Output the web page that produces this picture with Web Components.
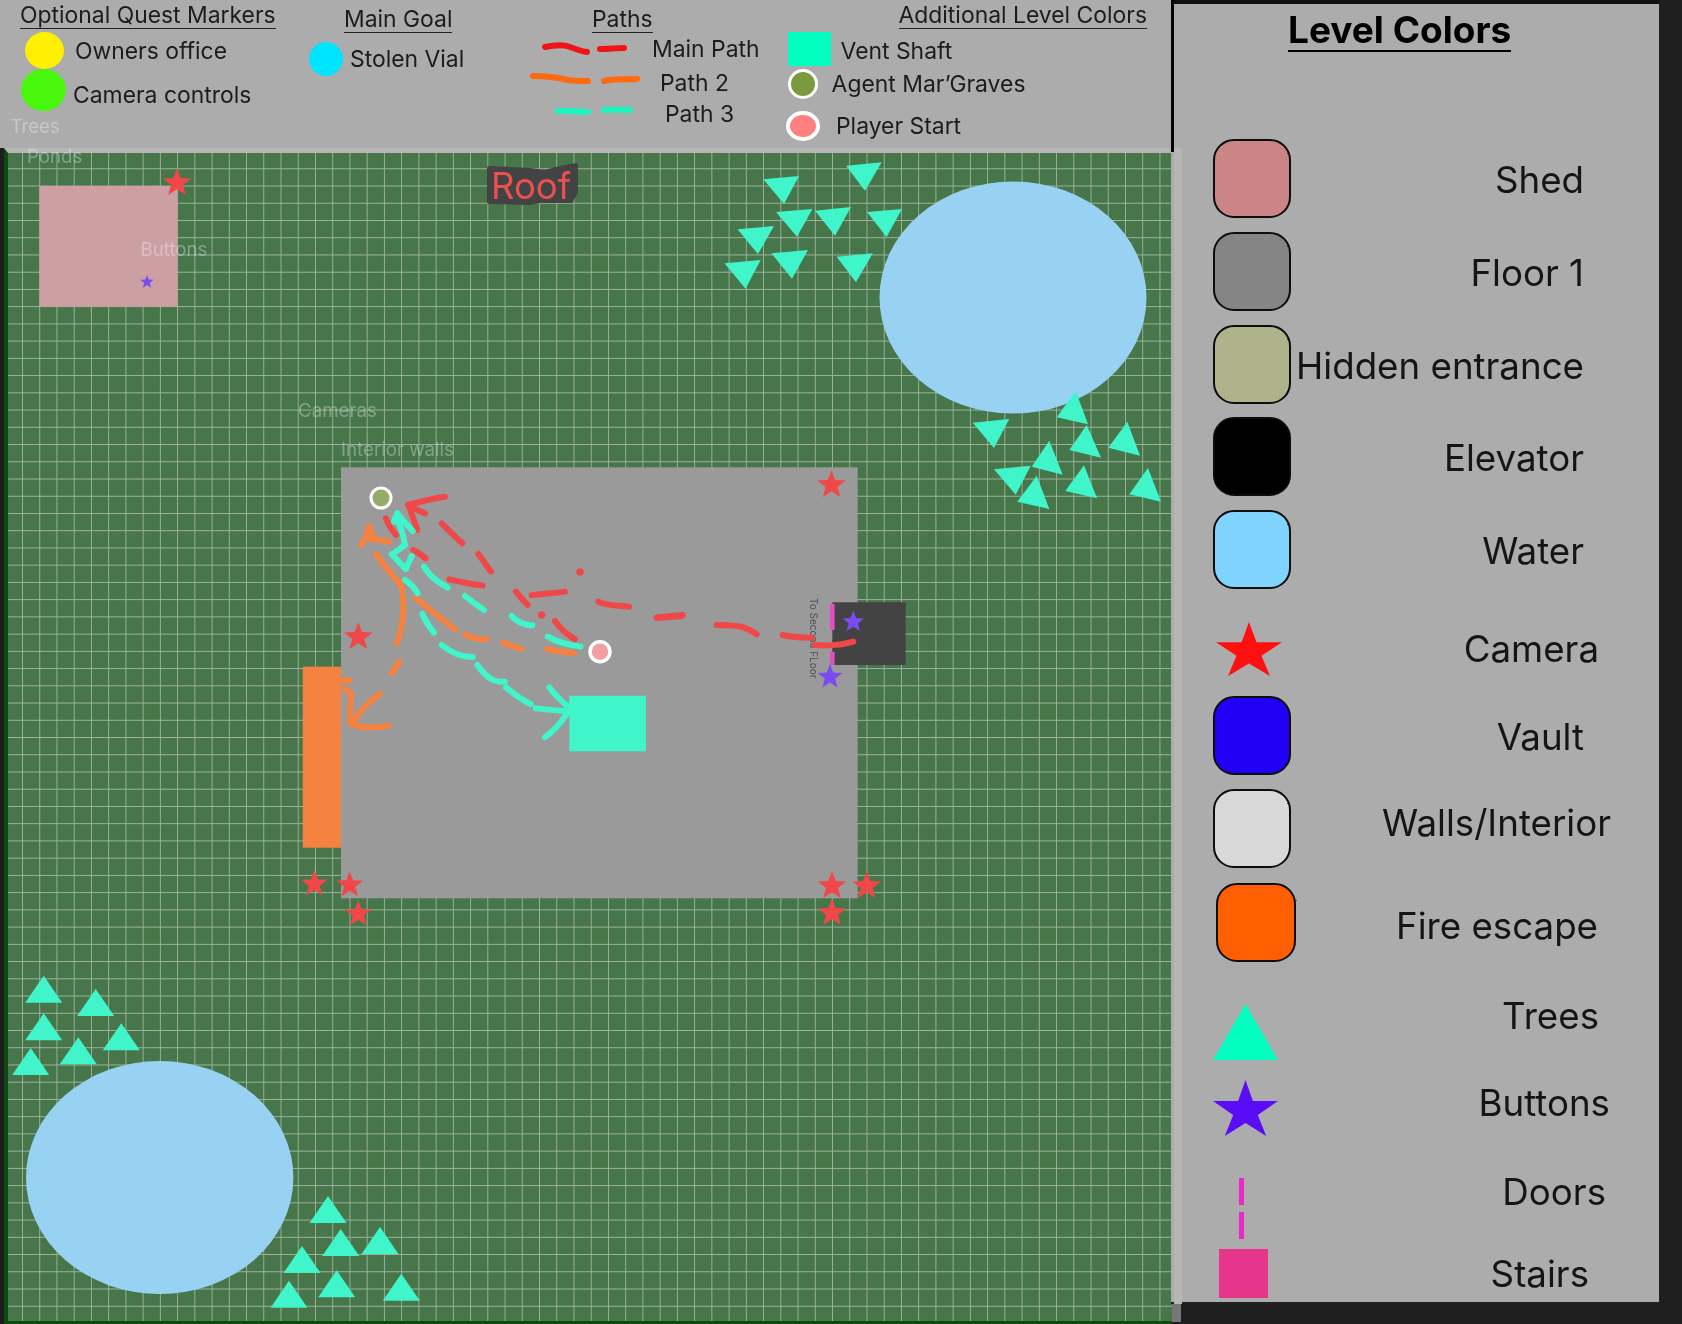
<!DOCTYPE html>
<html>
<head>
<meta charset="utf-8">
<title>Level map</title>
<style>
html,body{margin:0;padding:0;background:#1e1e1e;overflow:hidden;}
</style>
</head>
<body>
<level-sheet>
    <div slot="left">
        <legend-bar>
            <legend-group heading="Optional Quest Markers" style="--w:309px;--hl:20px;--ht:2.5px">
                <legend-row style="--mt:3px;--pl:25px;--gap:11px;--nudge:1px"><mark-dot slot="mark" style="--mw:39px;--mh:37px;--c:#fff000"></mark-dot>Owners office</legend-row>
                <legend-row style="--mt:0px;--pl:21px;--gap:7px;--nudge:5px"><mark-dot slot="mark" style="--mw:45px;--mh:42px;--c:#47f70c"></mark-dot>Camera controls</legend-row>
            </legend-group>
            <legend-group heading="Main Goal" style="--w:221px;--hl:35px;--ht:6.5px">
                <legend-row style="--mt:9px;--pl:0px;--gap:7.5px;--nudge:0px"><mark-dot slot="mark" style="--mw:33.5px;--mh:34px;--c:#00e5ff"></mark-dot>Stolen Vial</legend-row>
            </legend-group>
            <legend-group heading="Paths" style="--w:256px;--hl:62px;--ht:6.5px">
                <legend-row style="--mt:6px;--pl:0px;--gap:12px;--nudge:0px"><svg slot="mark" width="110" height="20" fill="none" stroke="#f01414" stroke-width="6" stroke-linecap="round"><path d="M15,8 C25,6 35,6 40,8 C45,10 50,12 57,13"/><path d="M70,10 C78,10 86,9 94,9"/></svg>Main Path</legend-row>
                <legend-row style="--mt:14px;--pl:0px;--gap:20px;--nudge:0px"><svg slot="mark" width="110" height="20" fill="none" stroke="#ff6a10" stroke-width="6" stroke-linecap="round"><path d="M3,3 C15,3 30,5 38,7 C45,8 52,8 58,8"/><path d="M74,8 C85,5 98,7 107,6"/></svg>Path 2</legend-row>
                <legend-row style="--mt:11px;--pl:0px;--gap:25px;--nudge:0px"><svg slot="mark" width="110" height="20" fill="none" stroke="#1cf5c0" stroke-width="6" stroke-linecap="round"><path d="M28,7 C38,6 48,8 58,8"/><path d="M74,6 C82,6 90,5 100,6"/></svg>Path 3</legend-row>
            </legend-group>
            <legend-group heading="Additional Level Colors" style="--w:385px;--hl:112.5px;--ht:3px">
                <legend-row style="--mt:2.5px;--pl:2px;--gap:9.5px;--nudge:2px"><mark-dot slot="mark" style="--mw:43px;--mh:34px;--c:#00ffc0;--r:0"></mark-dot>Vent Shaft</legend-row>
                <legend-row style="--mt:3px;--pl:2px;--gap:13.6px;--nudge:0px"><mark-dot slot="mark" style="--mw:30px;--mh:30px;--c:#7b9a3d;--b:3px solid #fff"></mark-dot>Agent Mar’Graves</legend-row>
                <legend-row style="--mt:12px;--pl:0px;--gap:16px;--nudge:0px"><mark-dot slot="mark" style="--mw:34px;--mh:30px;--c:#ff8080;--b:4px solid #fff"></mark-dot>Player Start</legend-row>
            </legend-group>
        </legend-bar>
        <level-map></level-map>
    </div>
    <level-colors slot="right" heading="Level Colors">
        <color-row kind="box" color="#cb8585" style="--mt:87px;--mr:75px;--nudge:2px">Shed</color-row>
        <color-row kind="box" color="#858585" style="--mt:14px;--mr:75px;--nudge:2px">Floor 1</color-row>
        <color-row kind="box" color="#aeb38c" style="--mt:14px;--mr:75px;--nudge:2px">Hidden entrance</color-row>
        <color-row kind="box" color="#000000" style="--mt:13px;--mr:75px;--nudge:2px">Elevator</color-row>
        <color-row kind="box" color="#7fd4ff" style="--mt:14px;--mr:75px;--nudge:2px">Water</color-row>
        <color-row kind="star" color="#ff1010" style="--mt:33px;--mr:60px;--ml:45px;--iw:66px;--ih:54px">Camera</color-row>
        <color-row kind="box" color="#2006f5" style="--mt:20px;--mr:75px;--nudge:2px">Vault</color-row>
        <color-row kind="box" color="#d9d9d9" style="--mt:14px;--mr:48px;--nudge:-11px">Walls/Interior</color-row>
        <color-row kind="box" color="#ff5f00" style="--mt:15px;--mr:61px;--ml:45px;--iw:80px;--nudge:7px">Fire escape</color-row>
        <color-row kind="tri" color="#00ffc0" style="--mt:42px;--mr:60px;--iw:65px;--ih:56px;--nudge:-32px">Trees</color-row>
        <color-row kind="star" color="#5a0cf5" style="--mt:20px;--mr:49px;--iw:65px;--ih:56px;--nudge:-10px">Buttons</color-row>
        <color-row kind="door" color="#e629c8" style="--mt:42px;--mr:53px;--iw:65px;--ih:61px;--nudge:-33px">Doors</color-row>
        <color-row kind="square" color="#e6358b" style="--mt:10px;--mr:70px;--ml:48px;--iw:49px;--ih:49px">Stairs</color-row>
    </level-colors>
</level-sheet>

<script>
const FONT = '"Inter","Liberation Sans",sans-serif';

class levelSheet extends HTMLElement {
    constructor() {
        super();
        this.attachShadow({ mode: 'open' });
        this.shadowRoot.innerHTML = `
        <style>
            :host{display:flex;width:1682px;height:1324px;background:#1e1e1e;font-family:${FONT};filter:blur(.45px);}
            .l{width:1171px;flex:none;}
            .r{flex:none;}
        </style>
        <div class="l"><slot name="left"></slot></div>
        <div class="r"><slot name="right"></slot></div>`;
    }
}

class legendBar extends HTMLElement {
    constructor() {
        super();
        this.attachShadow({ mode: 'open' });
        this.shadowRoot.innerHTML = `
        <style>
            :host{display:flex;height:148px;background:#acacac;color:#1c1c1c;}
        </style>
        <slot></slot>`;
    }
}

class legendGroup extends HTMLElement {
    constructor() {
        super();
        this.attachShadow({ mode: 'open' });
        this.shadowRoot.innerHTML = `
        <style>
            :host{display:flex;flex-direction:column;align-items:flex-start;flex:none;width:var(--w);}
            h3{margin:var(--ht) 0 0 var(--hl);font:400 22.9px/25px ${FONT};border-bottom:1.5px solid #222;white-space:nowrap;}
        </style>
        <h3></h3>
        <slot></slot>`;
        this.shadowRoot.querySelector('h3').textContent = this.getAttribute('heading');
    }
}

class legendRow extends HTMLElement {
    constructor() {
        super();
        this.attachShadow({ mode: 'open' });
        this.shadowRoot.innerHTML = `
        <style>
            :host{display:flex;align-items:center;margin-top:var(--mt,0);padding-left:var(--pl,0);font:400 22.9px/20px ${FONT};white-space:nowrap;}
            ::slotted([slot=mark]){flex:none;}
            span{margin-left:var(--gap,8px);margin-top:calc(var(--nudge,0px)*2);}
        </style>
        <slot name="mark"></slot><span><slot></slot></span>`;
    }
}

class markDot extends HTMLElement {
    constructor() {
        super();
        this.attachShadow({ mode: 'open' });
        this.shadowRoot.innerHTML = `
        <style>
            :host{display:block;box-sizing:border-box;width:var(--mw);height:var(--mh);background:var(--c);border:var(--b,none);border-radius:var(--r,50%);}
        </style>`;
    }
}

class levelColors extends HTMLElement {
    constructor() {
        super();
        this.attachShadow({ mode: 'open' });
        this.shadowRoot.innerHTML = `
        <style>
            :host{display:block;position:relative;box-sizing:border-box;width:489px;height:1304px;background:#acacac;border-top:4px solid #111;border-right:1px solid #222;border-bottom:2px solid #222;color:#151515;}
            h2{margin:5px 0 0 117px;width:max-content;font:700 37px/41px ${FONT};color:#000;border-bottom:2px solid #000;white-space:nowrap;}
            /* black edge on top, pale strip from the map header down */
            .edge{position:absolute;left:0;top:-4px;width:3px;height:152px;background:#000;}
            .strip{position:absolute;left:3px;top:144px;bottom:-2px;width:8px;background:#b6b6b6;}
            .foot{position:absolute;left:1px;top:100%;margin-top:2px;width:9px;height:18px;background:#777;}
        </style>
        <div class="edge"></div><div class="strip"></div><div class="foot"></div>
        <h2></h2>
        <slot></slot>`;
        this.shadowRoot.querySelector('h2').textContent = this.getAttribute('heading');
    }
}

class colorRow extends HTMLElement {
    constructor() {
        super();
        this.attachShadow({ mode: 'open' });
        const c = this.getAttribute('color');
        const kind = this.getAttribute('kind');
        let icon = '';
        if (kind == 'box') icon = `<svg width="0" height="0" style="position:absolute"><filter id="rough" x="-5%" y="-5%" width="110%" height="110%"><feTurbulence type="fractalNoise" baseFrequency=".18" numOctaves="2" seed="4"/><feDisplacementMap in="SourceGraphic" scale="1.4"/></filter></svg><div class="box" style="background:${c}"></div>`;
        if (kind == 'square') icon = `<div class="ico" style="background:${c}"></div>`;
        if (kind == 'star') icon = `<svg class="ico" viewBox="0 0 66 56" preserveAspectRatio="none"><polygon fill="${c}" points="33,0 40.5,21 66,21 45.5,35 54,56 33,43 12,56 20.5,35 0,21 25.5,21"/></svg>`;
        if (kind == 'tri') icon = `<svg class="ico" viewBox="0 0 65 56"><polygon fill="${c}" points="32.5,0 65,56 0,56"/></svg>`;
        if (kind == 'door') icon = `<svg class="ico" viewBox="0 0 65 61"><path fill="${c}" d="M26,0h5v27h-5zM26,34h5v27h-5z"/></svg>`;
        this.shadowRoot.innerHTML = `
        <style>
            :host{display:flex;align-items:center;margin-top:var(--mt,0);padding:0 var(--mr,77px) 0 var(--ml,42px);font:400 36.7px/42px ${FONT};white-space:nowrap;}
            .box{box-sizing:border-box;flex:none;width:var(--iw,78px);height:79px;border:2px solid #0a0a0a;border-radius:21px;filter:url(#rough);}
            .ico{display:block;flex:none;width:var(--iw);height:var(--ih);}
            span{margin-left:auto;margin-top:calc(var(--nudge,0px)*1);}
        </style>
        ${icon}<span><slot></slot></span>`;
    }
}

/* map drawing, in page coordinates */
function star(x, y, r, fill) {
    let pts = [];
    for (let i = 0; i < 10; i++) {
        let rad = i % 2 ? r * 0.42 : r;
        let a = -Math.PI / 2 + i * Math.PI / 5;
        pts.push((x + rad * Math.cos(a)).toFixed(1) + ',' + (y + rad * Math.sin(a)).toFixed(1));
    }
    return `<polygon fill="${fill}" points="${pts.join(' ')}"/>`;
}
const TEAL = '#41f5cb', RED = '#f04848', ORANGE = '#f58240', VIOLET = '#7a4bf0';
const upTrees = [[43.7,975.7],[95.7,989],[43.7,1013.3],[121.3,1023.3],[78.3,1037.3],[30.7,1048],[328,1196],[340.7,1229],[380,1227],[302,1246],[336.7,1270.3],[401.3,1273.7],[289,1280.7]];
const tiltTrees = [
    '763.4,179.3 799,176 784,204','846,165.7 881.7,162.3 865,190.7','776,212 812.5,209 797,236.7','815,210.7 851,207 835,235.7',
    '867,212 902,209 886.6,237','737.5,229.3 774,226 758,254','771.4,253.3 808,250 792,278.7','836.6,256.7 872.8,253.3 856,282.3','724.5,263.3 760.7,260 745.5,288.7',
    '972.7,422.7 1009.3,419 994,448','1075.7,391 1056.7,417.3 1088,424.3','1086.7,425 1069.3,450 1101,457.7','1127.3,421.7 1108.3,447.7 1140,455.7',
    '1049.3,440.7 1031.7,466.7 1062.7,474.7','994,469.3 1030.7,465.7 1015.7,494.7','1036.7,475.7 1017.3,501.7 1049.3,509','1084,465.3 1065.3,491 1097,498.3','1148,468 1129.3,494.3 1161,501.7'
];
const redLeft = ['M465,140 C430,145 390,155 355,165','M355,165 C365,175 395,185 405,190','M355,165 C365,190 375,220 382,240','M288,205 C295,225 305,240 318,255','M370,300 C385,308 395,315 407,325','M455,220 C475,240 495,260 517,280','M565,312 C580,330 590,350 603,365','M478,388 C510,395 545,402 578,407','M678,425 C690,440 700,452 713,465','M725,436 C755,432 790,430 825,425','M795,513 C810,535 830,553 855,568','M925,455 C950,468 985,467 1017,470','M1100,503 C1125,500 1150,498 1178,495'];
const redRight = ['M350,233 C375,232 405,230 428,227','M530,255 C560,255 590,255 610,262 C625,268 640,275 650,283','M728,285 C755,292 785,292 815,294','M825,315 C865,318 905,315 940,305'];
const tealLeft = ['M322,190 L312,215','M315,205 L332,202','M322,190 C335,210 352,225 368,243','M325,215 C335,240 342,265 345,285','M345,285 L318,305','M305,312 L347,357','M347,357 L365,318','M345,390 C360,400 375,415 383,430','M402,350 C415,375 440,395 473,413','M525,438 C540,450 560,465 582,480','M665,498 C680,515 700,525 727,526','M773,560 C800,575 835,585 872,590','M397,492 C405,510 418,530 432,548','M455,585 C480,605 510,622 548,621','M562,645 C580,670 605,700 645,695','M648,712 C670,730 695,750 722,762','M737,775 C765,778 795,782 830,783','M778,712 C795,735 815,755 835,770','M765,862 C790,845 815,815 835,785'];
const orangeLeft = ['M258,313 C280,345 310,380 335,408','M330,395 C345,440 345,520 320,580','M213,285 C225,270 232,250 238,228 C245,245 250,260 252,268 C270,270 285,272 297,276','M240,240 L245,270','M378,445 C415,475 455,505 495,538','M525,553 C545,565 565,568 590,568','M640,578 C660,585 675,590 695,597','M772,597 C795,605 825,605 852,610','M328,635 C320,650 312,660 305,670','M270,732 C255,742 240,755 230,765','M155,690 L178,692','M165,715 L180,730','M183,730 C182,770 180,800 180,820 C210,835 260,835 295,827','M185,820 C200,800 210,790 220,775'];
const strokes = (list, colour) => `<g fill="none" stroke="${colour}" stroke-width="18" stroke-linecap="round" stroke-linejoin="round">${list.map(d => `<path d="${d}"/>`).join('')}</g>`;

class levelMap extends HTMLElement {
    constructor() {
        super();
        this.attachShadow({ mode: 'open' });
        const ghost = [['Trees',10.5,133],['Ponds',27,163],['Buttons',140.5,256],['Cameras',298,417],['Interior walls',341,456]];
        this.shadowRoot.innerHTML = `
        <style>
            :host{display:block;position:relative;box-sizing:border-box;width:1168px;height:1176px;margin-left:4px;border-left:4px solid #0c4a12;border-top:5px solid #b6b6b6;border-bottom:3px solid #0c4a12;
                background-color:#47764a;
                background-image:linear-gradient(to right,#9bb09b 1.3px,transparent 1.3px),linear-gradient(to bottom,#a0b4a0 1.3px,transparent 1.3px);
                background-size:17.235px 17.235px;background-position:14px 15.3px;}
            svg{position:absolute;left:0;top:0;width:1164px;height:1168px;overflow:visible;}
            text{font-family:${FONT};}
        </style>
        <svg viewBox="8 153 1164 1168">
            <rect x="39.5" y="186" width="138" height="120.7" fill="#cc9fa2"/>
            <ellipse cx="1013" cy="297.5" rx="133.5" ry="116" fill="#98d2f2"/>
            <ellipse cx="159.7" cy="1177.5" rx="133.7" ry="116.5" fill="#98d2f2"/>
            <rect x="341" y="467.3" width="516.7" height="431" fill="#9a9a9a"/>
            <rect x="302.7" y="666.7" width="38.3" height="181" fill="${ORANGE}"/>
            <path d="M832.3,602.3H905.7V665H832.3Z" fill="#434343"/>
            <path d="M830,604h4.6v26H830zM830,651.7h4.6V665H830z" fill="#e24fc5"/>
            <rect x="569.3" y="695.7" width="76.7" height="55.6" fill="${TEAL}"/>
            ${upTrees.map(t => `<polygon fill="${TEAL}" points="${t[0]},${t[1]} ${t[0] + 18.5},${t[1] + 27} ${t[0] - 18.5},${t[1] + 27}"/>`).join('')}
            ${tiltTrees.map(p => `<polygon fill="${TEAL}" points="${p}"/>`).join('')}
            ${star(177,183,15,RED)}${star(831.5,485,15,RED)}${star(358.3,637,15,RED)}
            ${star(314.3,884,14,RED)}${star(349.7,885,14,RED)}${star(358.3,914,14,RED)}
            ${star(832,886,15,RED)}${star(866.7,886,15,RED)}${star(832,913,15,RED)}
            ${star(147,282,7,VIOLET)}${star(853.3,622,11.5,VIOLET)}${star(830,677,13,VIOLET)}
            <text x="814" y="594" font-size="10" fill="#505050" transform="rotate(90 810 594)">To Second FLoor</text>
            <g transform="translate(290 450) scale(.3333)">
                ${strokes(orangeLeft, ORANGE)}
                ${strokes(redLeft, RED)}
                <circle cx="870" cy="366" r="11" fill="${RED}"/><circle cx="755" cy="495" r="11" fill="${RED}"/>
                ${strokes(tealLeft, TEAL)}
            </g>
            <g transform="translate(540 540) scale(.3333)">${strokes(redRight, RED)}</g>
            <circle cx="381" cy="498" r="10" fill="#94ac68" stroke="#fff" stroke-width="3"/>
            <circle cx="600" cy="651.7" r="10" fill="#f0a0a0" stroke="#fff" stroke-width="3.5"/>
            <path d="M489,168 L530,170 L545,172 L560,168 L576,165 L576,192 L571,201 L540,201 L530,203 L489,202Z" fill="#434343" stroke="#434343" stroke-width="4" stroke-linejoin="round"/>
            <text x="491" y="199" font-size="36.5" fill="#ea5050">Roof</text>
            ${ghost.map(g => `<text x="${g[1]}" y="${g[2]}" font-size="18.7" fill="#fff" fill-opacity=".32">${g[0]}</text>`).join('')}
        </svg>`;
    }
}

window.customElements.define('level-sheet', levelSheet);
window.customElements.define('legend-bar', legendBar);
window.customElements.define('legend-group', legendGroup);
window.customElements.define('legend-row', legendRow);
window.customElements.define('mark-dot', markDot);
window.customElements.define('level-colors', levelColors);
window.customElements.define('color-row', colorRow);
window.customElements.define('level-map', levelMap);
</script>
</body>
</html>
